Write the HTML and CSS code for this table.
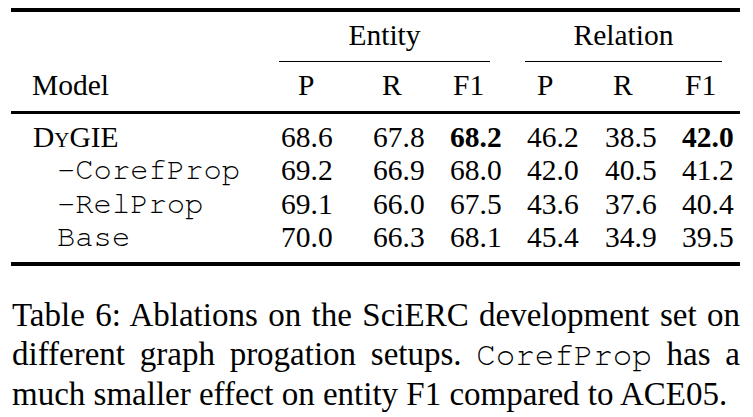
FILE: index.html
```html
<!DOCTYPE html>
<html>
<head>
<meta charset="utf-8">
<link rel="stylesheet" href="styles.css">
</head>
<body>
<div class="page">
  <div class="table">
    <div class="head">
      <div class="row groups">
        <div class="cell"></div>
        <div class="group entity"><span class="gline">Entity</span></div>
        <div class="group relation"><span class="gline">Relation</span></div>
      </div>
      <div class="row cols">
        <div class="cell model">Model</div>
        <div class="cell h h-ep">P</div>
        <div class="cell h h-er">R</div>
        <div class="cell h h-ef">F1</div>
        <div class="cell h h-rp">P</div>
        <div class="cell h h-rr">R</div>
        <div class="cell h h-rf">F1</div>
      </div>
    </div>
    <div class="body">
      <div class="row">
        <div class="cell name sc">DyGIE</div>
        <div class="cell">68.6</div><div class="cell">67.8</div><div class="cell b">68.2</div>
        <div class="cell">46.2</div><div class="cell">38.5</div><div class="cell b">42.0</div>
      </div>
      <div class="row">
        <div class="cell name sub tt">−CorefProp</div>
        <div class="cell">69.2</div><div class="cell">66.9</div><div class="cell">68.0</div>
        <div class="cell">42.0</div><div class="cell">40.5</div><div class="cell">41.2</div>
      </div>
      <div class="row">
        <div class="cell name sub tt">−RelProp</div>
        <div class="cell">69.1</div><div class="cell">66.0</div><div class="cell">67.5</div>
        <div class="cell">43.6</div><div class="cell">37.6</div><div class="cell">40.4</div>
      </div>
      <div class="row">
        <div class="cell name sub tt">Base</div>
        <div class="cell">70.0</div><div class="cell">66.3</div><div class="cell">68.1</div>
        <div class="cell">45.4</div><div class="cell">34.9</div><div class="cell">39.5</div>
      </div>
    </div>
  </div>
  <p class="caption">Table 6: Ablations on the SciERC development set on different graph progation setups. <span class="ctt">CorefProp</span> has a much smaller effect on entity F1 compared to ACE05.</p>
</div>
</body>
</html>
```
FILE: styles.css
```css
html, body {
  margin: 0;
  padding: 0;
  background: #ffffff;
}
body {
  font-family: "Liberation Serif", "Times New Roman", serif;
  color: #000000;
}
.page {
  padding: 8px 0 0 11px;
  width: 729px;
}
.table {
  border-top: 4px solid #000;
  border-bottom: 4px solid #000;
  font-size: 29.5px;
}
.head {
  border-bottom: 3px solid #000;
}
.row {
  display: grid;
  grid-template-columns: 270px 92px 77px 77px 78px 77px 58px;
  white-space: nowrap;
}
.groups {
  padding-top: 7px;
  line-height: 33px;
}
.group {
  display: flex;
}
.entity {
  grid-column: 2 / 5;
}
.relation {
  grid-column: 5 / 8;
}
.gline {
  display: block;
  flex: 1;
  text-align: center;
  padding-bottom: 9px;
  border-bottom: 1px solid #000;
  margin-left: -2px;
}
.entity .gline {
  margin-right: 37px;
}
.relation .gline {
  margin-right: 18px;
}
.cols {
  line-height: 33px;
  padding: 7px 0 9px;
}
.model {
  padding-left: 21px;
}
.h-ep { padding-left: 17px; }
.h-er { padding-left: 9px; }
.h-ef { padding-left: 3px; }
.h-rp { padding-left: 10px; }
.h-rr { padding-left: 8px; }
.h-rf { padding-left: 3px; }
.body {
  padding: 7px 0 7.8px;
}
.body .row {
  line-height: 33.3px;
}
.name {
  padding-left: 22px;
}
.sc {
  font-variant: small-caps;
}
.sub {
  padding-left: 46px;
}
.tt {
  font-family: "Nimbus Mono PS", "FreeMono", "Courier", "Liberation Mono", monospace;
  font-size: 30.5px;
}
.b {
  font-weight: bold;
}
.caption {
  margin: 30px 0 0 1px;
  width: 728px;
  font-size: 33px;
  line-height: 39.5px;
  text-align: justify;
}
.ctt {
  font-family: "Nimbus Mono PS", "FreeMono", "Courier", "Liberation Mono", monospace;
  font-size: 32.5px;
  line-height: 1;
}
```
